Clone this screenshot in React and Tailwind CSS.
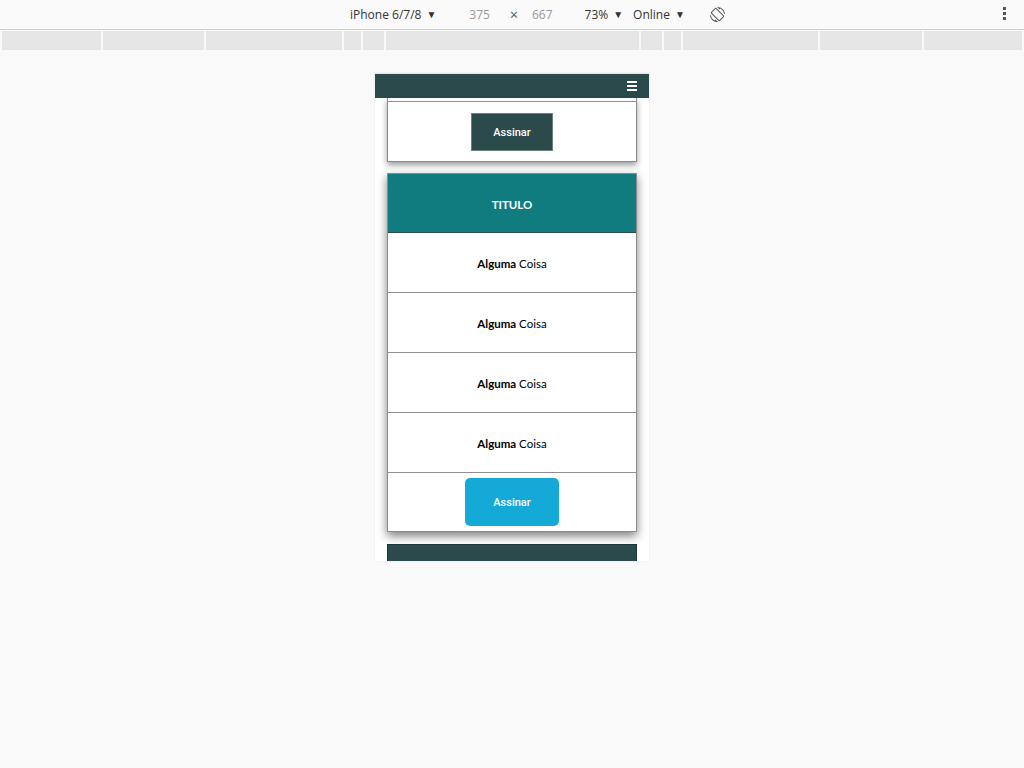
import { MdScreenRotation } from "react-icons/md";

const rulerWidths = [99, 101, 136, 17, 21, 253, 21, 17, 135, 102, 98];

const Row = ({ children }) => (
    <div className="h-[60px] pt-[2px] flex items-center justify-center border-b-[1.5px] border-[#8f8f8f] text-[11.5px] text-black" style={{ fontFamily: "Lato, sans-serif" }}>
        {children}
    </div>
);

const App = () => {
    return (
        <div className="w-[1024px] h-[768px] bg-[#f9f9f9] overflow-hidden" style={{ fontFamily: "'Open Sans', sans-serif" }}>
            {/* Toolbar */}
            <div className="h-[30px] bg-[#fafafa] border-b border-[#cfcfcf] flex items-center text-[12px] text-[#333] relative">
                <div className="flex items-center pl-[350px]">
                    <span>iPhone 6/7/8</span>
                    <span className="ml-[5px] text-[10px]">▼</span>
                    <span className="ml-[33px] text-[#999]">375</span>
                    <span className="ml-[20px] text-[#555] text-[14px]">×</span>
                    <span className="ml-[14px] text-[#999]">667</span>
                    <span className="ml-[32px]">73%</span>
                    <span className="ml-[5px] text-[10px]">▼</span>
                    <span className="ml-[10px]">Online</span>
                    <span className="ml-[5px] text-[10px]">▼</span>
                    <MdScreenRotation className="ml-[25px] text-[#555] text-[15px]" />
                </div>
                <div className="absolute right-[18px] top-[7px] flex flex-col gap-[2px]">
                    <span className="w-[3px] h-[3px] bg-[#555]" />
                    <span className="w-[3px] h-[3px] bg-[#555]" />
                    <span className="w-[3px] h-[3px] bg-[#555]" />
                </div>
            </div>

            {/* Ruler */}
            <div className="mt-[1px] px-[2px] flex gap-[2px] h-[19px]">
                {rulerWidths.map((w, i) => (
                    <div key={i} className="bg-[#e6e6e6] h-full" style={{ width: w }} />
                ))}
            </div>

            {/* Phone */}
            <div className="ml-[375px] mt-[23px] w-[274px] h-[488px] bg-white border-t border-[#e6e6e6] overflow-hidden flex flex-col shadow-[0_0_2px_rgba(0,0,0,0.08)]">
                <div className="h-[24px] shrink-0 bg-[#2b4a4b] flex items-center justify-end pr-[12px]">
                    <div className="flex flex-col gap-[2px]">
                        <span className="w-[10px] h-[2px] bg-white" />
                        <span className="w-[10px] h-[2px] bg-white" />
                        <span className="w-[10px] h-[2px] bg-white" />
                    </div>
                </div>

                <div className="px-[12px] flex flex-col gap-[12px]">
                    {/* Card 1 (scrolled) */}
                    <div className="bg-white border-x border-b border-[#8c8c8c] shadow-[0_3px_6px_rgba(0,0,0,0.4)]">
                        <div className="h-[4px] border-b-[1.5px] border-[#8f8f8f]" />
                        <div className="h-[59px] flex items-center justify-center">
                            <button className="w-[82px] h-[38px] pt-[3px] bg-[#2b4a4b] border border-[#6b8080] text-white text-[11px] font-medium" style={{ fontFamily: "Roboto, sans-serif" }}>
                                Assinar
                            </button>
                        </div>
                    </div>

                    {/* Card 2 */}
                    <div className="-mt-[1px] bg-white border border-[#8c8c8c] shadow-[0_4px_9px_rgba(0,0,0,0.5)]">
                        <div className="h-[59px] pt-[3px] bg-[#117c7f] flex items-center justify-center text-white text-[11.5px] font-bold border-b border-[#2b4a4b]" style={{ fontFamily: "Lato, sans-serif" }}>
                            TITULO
                        </div>
                        {[0, 1, 2, 3].map((i) => (
                            <Row key={i}>
                                <span className="font-bold">Alguma</span>&nbsp;Coisa
                            </Row>
                        ))}
                        <div className="h-[58px] flex items-center justify-center">
                            <button className="w-[94px] h-[48px] pt-[3px] rounded-[5px] bg-[#14a9d6] text-white text-[11px] font-medium" style={{ fontFamily: "Roboto, sans-serif" }}>
                                Assinar
                            </button>
                        </div>
                    </div>

                    {/* Card 3 */}
                    <div className="h-[60px] shrink-0 bg-[#2b4a4b] border border-[#1e3535]" />
                </div>
            </div>
        </div>
    );
};

export default App;
